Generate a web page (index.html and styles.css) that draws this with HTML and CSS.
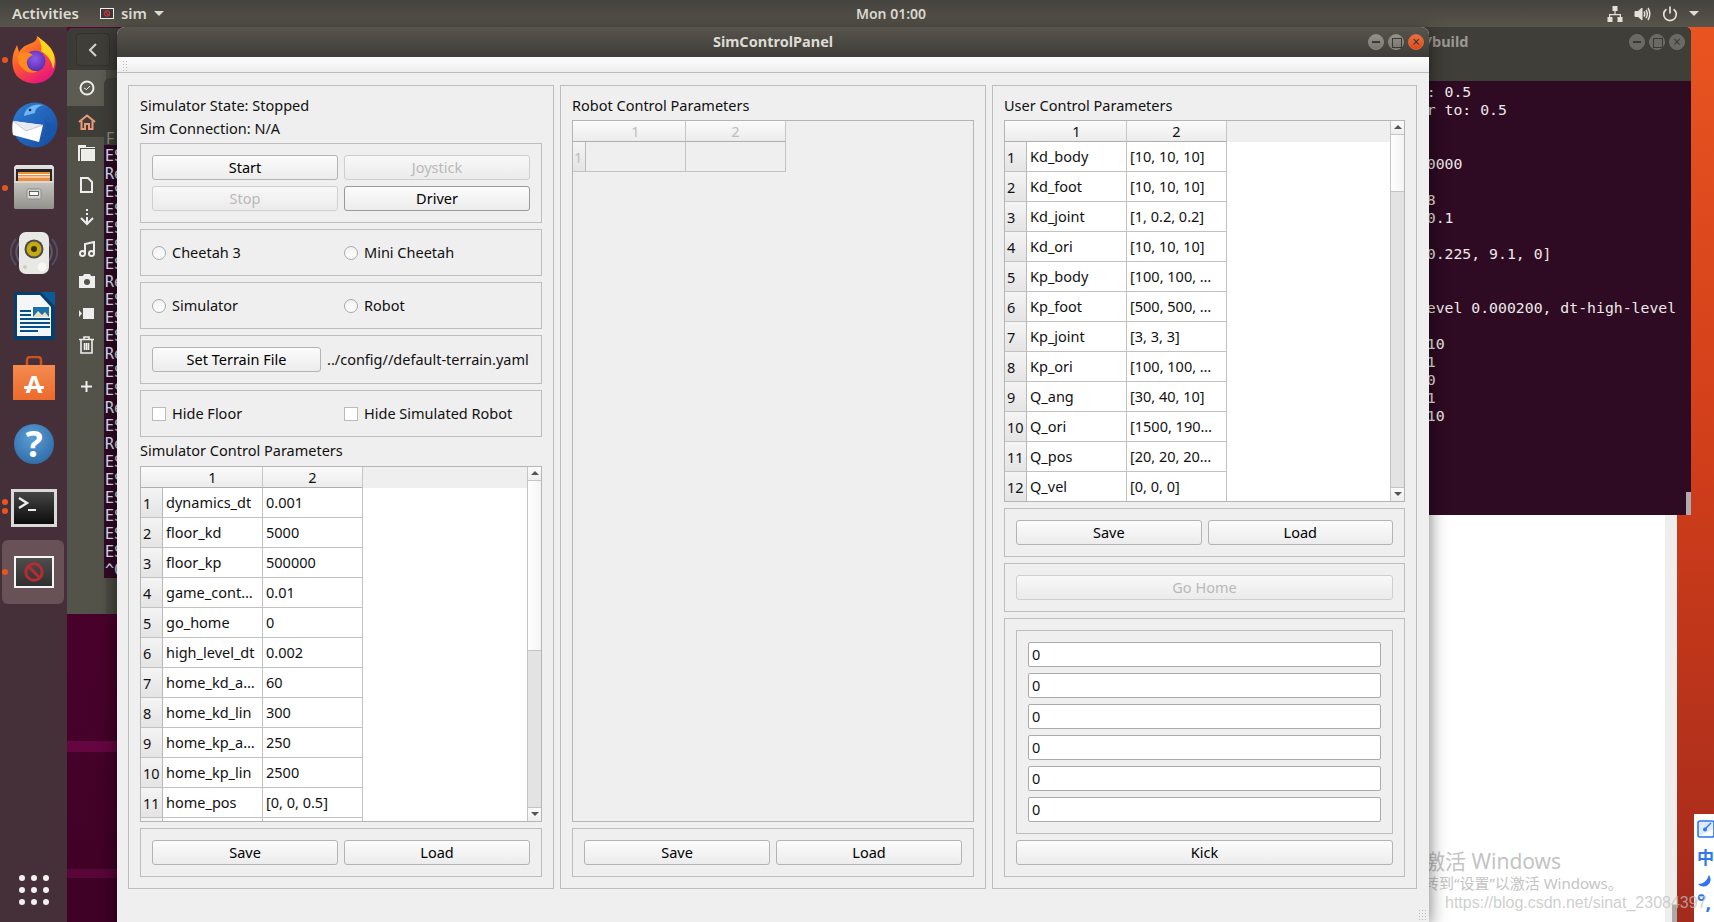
FILE: index.html
```html
<!DOCTYPE html>
<html lang="en">
<head>
<meta charset="utf-8">
<title>SimControlPanel</title>
<link rel="stylesheet" href="styles.css">
</head>
<body>
<header class="topbar">
  <div class="topbar-left">
    <span class="activities">Activities</span>
    <span class="app-menu">
      <svg class="app-menu-icon" viewBox="0 0 14 11"><rect x=".5" y=".5" width="13" height="10" fill="#3a3a3a" stroke="#eee"/><circle cx="7" cy="5.5" r="2.6" fill="none" stroke="#c8343a" stroke-width="1.2"/><path d="M5.2 3.7 8.8 7.3" stroke="#c8343a" stroke-width="1.1"/></svg>
      <span>sim</span>
      <i class="caret"></i>
    </span>
  </div>
  <span class="clock">Mon 01:00</span>
  <div class="tray">
    <svg width="16" height="16" viewBox="0 0 16 16" fill="#e4e1d9"><rect x="5.5" y="0" width="5" height="5"/><rect x="0.5" y="11" width="5" height="5"/><rect x="10.5" y="11" width="5" height="5"/><path d="M7.4 5h1.2v3h5.4v3h-1.2V9.2H3.2V11H2V8h5.4z"/></svg>
    <svg width="17" height="16" viewBox="0 0 17 16" fill="none" stroke="#e4e1d9"><path d="M1 5.5h3L8 2v12l-4-3.500H1z" fill="#e4e1d9"/><path d="M10 5.500q1.500 2.500 0 5M12 3.800q2.600 4.200 0 8.400M14 2q3.600 6 0 12" stroke-width="1.500"/></svg>
    <svg width="16" height="16" viewBox="0 0 16 16" fill="none" stroke="#e4e1d9" stroke-width="1.700"><path d="M4.400 3.200a6.300 6.300 0 1 0 7.200 0M8 .5v7"/></svg>
    <i class="caret"></i>
  </div>
</header>

<div class="desktop">
  <nav class="dock">
    <div class="dock-item"><i class="run-dot"></i>
      <svg class="dock-icon" viewBox="0 0 48 48"><defs><linearGradient id="fx" x1="0" y1="0" x2=".6" y2="1"><stop offset="0" stop-color="#ffb020"/><stop offset=".5" stop-color="#ff5a2c"/><stop offset="1" stop-color="#e9187a"/></linearGradient><radialGradient id="fy" cx=".5" cy=".4" r=".6"><stop offset="0" stop-color="#8f5ce8"/><stop offset="1" stop-color="#5a2ab0"/></radialGradient></defs>
      <path d="M27 0c3 5 13 9 17 18 4 10 1 20-6 25-8 6-21 6-29-1C2 36 1 25 4 16l3-7 2 7c2-3 5-6 8-7 5-2 10-3 10-9z" fill="url(#fx)"/><path d="M27 0c6 5 14 9 17 19 1 5 1 10-1 14-1-9-6-14-12-18 1-4 0-9-4-15z" fill="#ffd21e"/><circle cx="25" cy="25" r="10.500" fill="url(#fy)"/><path d="M8 19c4-3 9-4 15 0-3 1-7 4-6 9 1 5 6 8 11 7-5 3-12 2-16-3-4-4-5-9-4-13z" fill="#ff8a1f"/></svg></div>
    <div class="dock-item">
      <svg class="dock-icon" viewBox="0 0 48 48"><defs><linearGradient id="tb" x1="0" y1="0" x2="1" y2="1"><stop offset="0" stop-color="#2e7fd8"/><stop offset="1" stop-color="#154a9c"/></linearGradient></defs>
      <circle cx="25" cy="25" r="22.500" fill="url(#tb)"/><path d="M14 15c2-8 10-12 20-10-6 1-9 4-9 8l-11 3z" fill="#6fb6ee"/><circle cx="20" cy="10" r="1.300" fill="#0c2a55"/><path d="M3 21l30 4-4 17-26-7c-1-4-1-10 0-14z" fill="#fff"/><path d="M3 21l13 10 17-6" fill="#e8eaf0" stroke="#aab" stroke-width=".6"/><path d="M33 18c4 6 4 16-2 26 8-3 14-10 15-19-4 0-9-3-13-7z" fill="#1b56ad"/></svg></div>
    <div class="dock-item"><i class="run-dot"></i>
      <svg class="dock-icon" viewBox="0 0 48 48"><defs><linearGradient id="cb" x1="0" y1="0" x2="0" y2="1"><stop offset="0" stop-color="#e6e4e0"/><stop offset="1" stop-color="#93918c"/></linearGradient></defs>
      <path d="M4 3l2-2h36l2 2v41l-1 1H5l-1-1z" fill="url(#cb)"/><rect x="6" y="5" width="36" height="13" fill="#262626"/><rect x="8" y="8" width="32" height="9" fill="#ef8e3a"/><path d="M8 10.500h32M8 13h32" stroke="#fff" stroke-width="1"/><rect x="4" y="17" width="40" height="2" fill="#d8d6d2"/><rect x="17" y="25" width="14" height="10" rx="1.500" fill="#d5d3cf" stroke="#8d8b87"/><rect x="19.500" y="27.500" width="9" height="4" fill="#fff" stroke="#444" stroke-width=".8"/></svg></div>
    <div class="dock-item">
      <svg class="dock-icon" viewBox="0 0 48 48"><path d="M6 11C-1 19-1 29 6 37M42 11c7 8 7 18 0 26" fill="none" stroke="#5a5a78" stroke-width="2" opacity=".7"/><path d="M10 14C5 20 5 28 10 34M38 14c5 6 5 14 0 20" fill="none" stroke="#6a6a88" stroke-width="2" opacity=".7"/><rect x="9" y="4" width="30" height="42" rx="7" fill="#e8e8e4"/><circle cx="24" cy="21" r="9.500" fill="#4a4a48"/><circle cx="24" cy="21" r="7.500" fill="#c6a912"/><circle cx="24" cy="21" r="3" fill="#3a3208"/><circle cx="32" cy="39" r="4.500" fill="#f7f7f5"/><circle cx="15" cy="39" r="2" fill="#ccc"/></svg></div>
    <div class="dock-item">
      <svg class="dock-icon" viewBox="0 0 48 48"><path d="M4 0h27l14 14v34H4z" fill="#063f6f"/><path d="M31 0h14v14z" fill="#0a5c97"/><path d="M7 3h23l11 12v29H7z" fill="#f4f6f7"/><path d="M10 19h11M10 23h11M10 27h30M10 31h30M10 35h30M10 39h18" stroke="#045087" stroke-width="2"/><rect x="23" y="15" width="16" height="10" fill="#1d70a8"/><path d="M23 25l5-6 4 4 3-3 4 5z" fill="#e9e2c8"/></svg></div>
    <div class="dock-item">
      <svg class="dock-icon" viewBox="0 0 48 48"><defs><linearGradient id="bg" x1="0" y1="0" x2="0" y2="1"><stop offset="0" stop-color="#f58b4f"/><stop offset="1" stop-color="#ec6a2c"/></linearGradient></defs><path d="M17 10V4q0-3 3-3h8q3 0 3 3v6" fill="none" stroke="#c9531f" stroke-width="2.500"/><rect x="3" y="9" width="42" height="35" fill="url(#bg)"/><text x="24" y="37" class="bag-letter">A</text><rect x="14" y="30" width="20" height="3" fill="#fff"/></svg></div>
    <div class="dock-item">
      <svg class="dock-icon" viewBox="0 0 48 48"><defs><radialGradient id="hp" cx=".45" cy=".35" r=".7"><stop offset="0" stop-color="#5c9dd6"/><stop offset="1" stop-color="#2e6ba6"/></radialGradient></defs><circle cx="24" cy="24" r="20" fill="url(#hp)"/><text x="24" y="37" class="help-letter">?</text></svg></div>
    <div class="dock-item"><i class="run-dot run-dot-a"></i><i class="run-dot run-dot-b"></i>
      <svg class="dock-icon" viewBox="0 0 48 48"><rect x="1" y="5" width="46" height="38" fill="#d9d9d7"/><defs><linearGradient id="tm" x1="0" y1="0" x2="0" y2="1"><stop offset="0" stop-color="#454545"/><stop offset="1" stop-color="#0c0c0c"/></linearGradient></defs><rect x="4" y="8" width="40" height="32" fill="url(#tm)"/><path d="M9 14l8 5-8 5" fill="none" stroke="#eee" stroke-width="2.400"/><path d="M18 26h8" stroke="#eee" stroke-width="2"/></svg></div>
    <div class="dock-item dock-item-active"><i class="run-dot"></i>
      <svg class="dock-icon" viewBox="0 0 48 48"><defs><linearGradient id="sm" x1="0" y1="0" x2="0" y2="1"><stop offset="0" stop-color="#4f4f4f"/><stop offset="1" stop-color="#2e2e2e"/></linearGradient></defs><rect x="5" y="9" width="38" height="30" fill="url(#sm)" stroke="#f4f4f4" stroke-width="2"/><circle cx="24" cy="24" r="8.200" fill="none" stroke="#b92b32" stroke-width="3"/><path d="M18.500 18.500l11 11" stroke="#b92b32" stroke-width="3"/></svg></div>
    <div class="app-grid"><i></i><i></i><i></i><i></i><i></i><i></i><i></i><i></i><i></i></div>
  </nav>

  <main class="wallpaper">
    <section class="files-window">
      <div class="files-head"><span class="back-btn"><svg width="10" height="14" viewBox="0 0 10 14" fill="none" stroke="#d6d3cb" stroke-width="2"><path d="M8 1 2 7l6 6"/></svg></span></div>
      <ul class="files-side">
        <li class="side-recent"><svg width="18" height="18" viewBox="0 0 18 18" fill="none" stroke="#eee" stroke-width="2"><circle cx="9" cy="9" r="6.500"/><path d="M6 9l2.500 1.500L12 7" stroke-width="1"/></svg></li>
        <li class="side-home"><svg width="18" height="16" viewBox="0 0 18 16" fill="none" stroke="#f0997a" stroke-width="2"><path d="M1 8l8-6.500L17 8"/><path d="M3.500 6.500V15h3.500v-5h4v5h3.500V6.500"/></svg></li>
        <li><svg width="17" height="16" viewBox="0 0 17 16" fill="#eeeeea"><path d="M0 0h8v2h9v1H2v13H0z"/><rect x="3" y="4" width="14" height="12"/></svg></li>
        <li><svg width="13" height="16" viewBox="0 0 13 16" fill="none" stroke="#eee" stroke-width="2"><path d="M1 1h7l4 4v10H1z"/></svg></li>
        <li><svg width="14" height="17" viewBox="0 0 14 17" fill="none" stroke="#eee" stroke-width="2"><path d="M7 0v2M7 4v2M7 8v7M1 9l6 6 6-6"/></svg></li>
        <li><svg width="16" height="16" viewBox="0 0 16 16" fill="none" stroke="#eee" stroke-width="2"><circle cx="3.500" cy="12.500" r="2.500"/><circle cx="12.500" cy="12.500" r="2.500"/><path d="M6 12V3l9-2v11"/></svg></li>
        <li><svg width="16" height="14" viewBox="0 0 16 14" fill="#eee"><path d="M5 0h6l1 2h4v12H0V2h4z"/><circle cx="8" cy="8" r="3" fill="#53534a"/></svg></li>
        <li><svg width="15" height="11" viewBox="0 0 15 11" fill="#eee"><rect x="4" width="11" height="11"/><path d="M0 2l3 3.500L0 9z"/></svg></li>
        <li><svg width="15" height="18" viewBox="0 0 15 18" fill="none" stroke="#eee" stroke-width="1.600"><path d="M0 3.500h15M5 3V1h5v2M2 4v13h11V4M5.500 7v7M7.500 7v7M9.500 7v7"/></svg></li>
        <li class="side-add"><svg width="11" height="11" viewBox="0 0 11 11" stroke="#eee" stroke-width="2"><path d="M5.500 0v11M0 5.500h11"/></svg></li>
      </ul>
      <div class="log-tab">F</div>
      <pre class="log-term">ES
Re
ES
ES
ES
ES
ES
Re
ES
ES
ES
Re
ES
ES
Re
ES
Re
ES
ES
ES
ES
ES
ES
^C</pre>
    </section>

    <section class="terminal-window">
      <div class="terminal-head">
        <span class="terminal-title">/build</span>
        <span class="win-btns win-btns-dim"><i class="wb wb-min"></i><i class="wb wb-max"></i><i class="wb wb-close"></i></span>
      </div>
      <pre class="terminal-text">   : 0.5
   r to: 0.5


   0000

   8
   0.1

   0.225, 9.1, 0]


   evel 0.000200, dt-high-level

   10
   1
   0
   1
   10</pre>
      <i class="terminal-thumb"></i>
    </section>

    <section class="browser-window">
      <div class="activate">
        <div class="activate-big">激活 Windows</div>
        <div class="activate-small">转到“设置”以激活 Windows。</div>
      </div>
      <i class="browser-thumb"></i>
    </section>

    <section class="sim-window">
      <div class="sim-title">
        <span>SimControlPanel</span>
        <span class="win-btns"><i class="wb wb-min"></i><i class="wb wb-max"></i><i class="wb wb-close wb-close-on"></i></span>
      </div>
      <div class="sim-toolbar"><i class="grip"></i></div>
      <div class="sim-body">

        <div class="group">
          <div class="status">
            <div class="label">Simulator State: Stopped</div>
            <div class="label">Sim Connection: N/A</div>
          </div>
          <div class="frame frame-buttons">
            <button class="btn">Start</button>
            <button class="btn" disabled>Joystick</button>
            <button class="btn" disabled>Stop</button>
            <button class="btn btn-focus">Driver</button>
          </div>
          <div class="frame frame-opts">
            <label class="opt"><i class="radio"></i>Cheetah 3</label>
            <label class="opt"><i class="radio"></i>Mini Cheetah</label>
          </div>
          <div class="frame frame-opts">
            <label class="opt"><i class="radio"></i>Simulator</label>
            <label class="opt"><i class="radio"></i>Robot</label>
          </div>
          <div class="frame frame-file">
            <button class="btn btn-file">Set Terrain File</button>
            <span class="file-path">../config//default-terrain.yaml</span>
          </div>
          <div class="frame frame-opts">
            <label class="opt"><i class="check"></i>Hide Floor</label>
            <label class="opt"><i class="check"></i>Hide Simulated Robot</label>
          </div>
          <div class="param-block">
            <div class="label label-short">Simulator Control Parameters</div>
            <div class="table">
              <div class="table-view">
                <table>
                  <colgroup><col class="c-rh"><col class="c-data"><col class="c-data"><col></colgroup>
                  <thead><tr><th class="corner"></th><th>1</th><th>2</th><th class="filler"></th></tr></thead>
                  <tbody>
                    <tr><th>1</th><td>dynamics_dt</td><td>0.001</td></tr>
                    <tr><th>2</th><td>floor_kd</td><td>5000</td></tr>
                    <tr><th>3</th><td>floor_kp</td><td>500000</td></tr>
                    <tr><th>4</th><td>game_cont…</td><td>0.01</td></tr>
                    <tr><th>5</th><td>go_home</td><td>0</td></tr>
                    <tr><th>6</th><td>high_level_dt</td><td>0.002</td></tr>
                    <tr><th>7</th><td>home_kd_a…</td><td>60</td></tr>
                    <tr><th>8</th><td>home_kd_lin</td><td>300</td></tr>
                    <tr><th>9</th><td>home_kp_a…</td><td>250</td></tr>
                    <tr><th>10</th><td>home_kp_lin</td><td>2500</td></tr>
                    <tr><th>11</th><td>home_pos</td><td>[0, 0, 0.5]</td></tr>
                    <tr><th></th><td></td><td></td></tr>
                  </tbody>
                </table>
              </div>
              <div class="scrollbar"><span class="sb-btn sb-up"></span><span class="sb-thumb sb-thumb-sim"></span><span class="sb-trough"></span><span class="sb-btn sb-down"></span></div>
            </div>
          </div>
          <div class="frame frame-save">
            <button class="btn">Save</button>
            <button class="btn">Load</button>
          </div>
        </div>

        <div class="group">
          <div class="param-block">
            <div class="label">Robot Control Parameters</div>
            <div class="table table-off">
              <div class="table-view">
                <table>
                  <colgroup><col class="c-rh-sm"><col class="c-data"><col class="c-data"><col></colgroup>
                  <thead><tr><th class="corner"></th><th>1</th><th>2</th><th class="filler"></th></tr></thead>
                  <tbody><tr><th>1</th><td></td><td></td></tr></tbody>
                </table>
              </div>
            </div>
          </div>
          <div class="frame frame-save">
            <button class="btn">Save</button>
            <button class="btn">Load</button>
          </div>
        </div>

        <div class="group">
          <div class="param-block param-block-user">
            <div class="label">User Control Parameters</div>
            <div class="table">
              <div class="table-view">
                <table>
                  <colgroup><col class="c-rh"><col class="c-data"><col class="c-data"><col></colgroup>
                  <thead><tr><th class="corner"></th><th>1</th><th>2</th><th class="filler"></th></tr></thead>
                  <tbody>
                    <tr><th>1</th><td>Kd_body</td><td>[10, 10, 10]</td></tr>
                    <tr><th>2</th><td>Kd_foot</td><td>[10, 10, 10]</td></tr>
                    <tr><th>3</th><td>Kd_joint</td><td>[1, 0.2, 0.2]</td></tr>
                    <tr><th>4</th><td>Kd_ori</td><td>[10, 10, 10]</td></tr>
                    <tr><th>5</th><td>Kp_body</td><td>[100, 100, …</td></tr>
                    <tr><th>6</th><td>Kp_foot</td><td>[500, 500, …</td></tr>
                    <tr><th>7</th><td>Kp_joint</td><td>[3, 3, 3]</td></tr>
                    <tr><th>8</th><td>Kp_ori</td><td>[100, 100, …</td></tr>
                    <tr><th>9</th><td>Q_ang</td><td>[30, 40, 10]</td></tr>
                    <tr><th>10</th><td>Q_ori</td><td>[1500, 190…</td></tr>
                    <tr><th>11</th><td>Q_pos</td><td>[20, 20, 20…</td></tr>
                    <tr><th>12</th><td>Q_vel</td><td>[0, 0, 0]</td></tr>
                  </tbody>
                </table>
              </div>
              <div class="scrollbar"><span class="sb-btn sb-up"></span><span class="sb-thumb sb-thumb-user"></span><span class="sb-trough"></span><span class="sb-btn sb-down"></span></div>
            </div>
          </div>
          <div class="frame frame-save">
            <button class="btn">Save</button>
            <button class="btn">Load</button>
          </div>
          <div class="frame frame-home">
            <button class="btn" disabled>Go Home</button>
          </div>
          <div class="frame frame-kick">
            <div class="frame frame-inputs">
              <input class="field" value="0">
              <input class="field" value="0">
              <input class="field" value="0">
              <input class="field" value="0">
              <input class="field" value="0">
              <input class="field" value="0">
            </div>
            <button class="btn">Kick</button>
          </div>
        </div>

      </div>
      <i class="size-grip"></i>
    </section>

    <div class="ime">
      <svg class="ime-check" width="18" height="18" viewBox="0 0 18 18"><rect x="1" y="1" width="16" height="16" rx="2" fill="#dfeafe" stroke="#2e76f2" stroke-width="1.600"/><path d="M8 9l6-6" stroke="#2e76f2" stroke-width="1.400"/><circle cx="8" cy="9.500" r="2" fill="#2e76f2"/><path d="M2 16l14-7v7z" fill="#fff" opacity=".8"/></svg>
      <span class="ime-cn">中</span>
      <svg class="ime-moon" width="15" height="15" viewBox="0 0 15 15"><path d="M12 1A7 7 0 0 1 1 10Q9 10 12 1z" fill="#2e76f2"/></svg>
      <span class="ime-punct">°,</span>
    </div>
  </main>
</div>

<div class="watermark">https://blog.csdn.net/sinat_23084397</div>
</body>
</html>
```

FILE: styles.css
```css
* { box-sizing: border-box; }
html, body { margin: 0; height: 100%; }
body {
  width: 1714px;
  height: 922px;
  overflow: hidden;
  position: relative;
  display: flex;
  flex-direction: column;
  font: 14.5px/1 "Noto Sans", sans-serif;
  color: #111;
  background: #300a24;
}

/* ---------- GNOME top bar ---------- */
.topbar {
  height: 27px;
  flex: none;
  display: flex;
  align-items: center;
  justify-content: space-between;
  padding: 0 15px 0 12px;
  position: relative;
  background: linear-gradient(#45433e, #57544b);
  color: #dfdcd4;
}
.topbar-left { display: flex; align-items: center; gap: 21px; }
.activities { font-size: 15px; font-weight: 600; }
.app-menu { display: flex; align-items: center; gap: 7px; font-size: 15px; font-weight: 600; }
.app-menu-icon { width: 14px; height: 11px; }
.caret { width: 0; height: 0; border: 5px solid transparent; border-top: 5px solid #dfdcd4; border-bottom: 0; }
.clock { position: absolute; left: 855px; width: 72px; text-align: center; font-weight: 600; font-size: 14px; white-space: nowrap; }
.tray { display: flex; align-items: center; gap: 11px; }

/* ---------- Desktop ---------- */
.desktop { flex: 1; display: flex; min-height: 0; }
.dock {
  width: 67px;
  flex: none;
  display: flex;
  flex-direction: column;
  padding-top: 1px;
  background: #45303a;
  position: relative;
  z-index: 3;
}
.dock-item { height: 64px; flex: none; display: flex; align-items: center; justify-content: center; position: relative; }
.dock-item-active::before {
  content: "";
  position: absolute;
  left: 2px; right: 3px; top: 0; bottom: 0;
  border-radius: 6px;
  background: #695158;
}
.dock-icon { width: 48px; height: 48px; position: relative; }
.bag-letter { font: 700 24px "Noto Sans", sans-serif; fill: #fff; text-anchor: middle; }
.help-letter { font: 700 36px "Noto Sans", sans-serif; fill: #fff; text-anchor: middle; }
.run-dot { position: absolute; left: 2px; top: 29px; width: 6px; height: 6px; border-radius: 50%; background: #e9541f; z-index: 1; }
.run-dot-a { top: 23px; }
.run-dot-b { top: 32px; }
.app-grid {
  margin-top: auto;
  margin-bottom: 17px;
  align-self: center;
  display: grid;
  grid-template-columns: repeat(3, 6px);
  gap: 6px;
}
.app-grid i { width: 6px; height: 6px; border-radius: 50%; background: #f2f0ee; }

.wallpaper {
  flex: 1;
  position: relative;
  background:
    linear-gradient(180deg, transparent 0 714px, #650640 714px 725px, transparent 725px 842px, #5a0538 842px 851px, transparent 851px),
    linear-gradient(180deg, #5c0336, #3f0126);
}
.wallpaper::after {
  content: "";
  position: absolute;
  left: 50%; right: 0; top: 0; bottom: 0;
  background: linear-gradient(180deg, #e95420 0%, #cf3d1a 50%, #a42a1c 100%);
}

/* File manager + log behind */
.files-window {
  position: absolute;
  left: 0; top: 1px;
  width: 60px;
  height: 586px;
  background: #4b4b43;
  z-index: 1;
  overflow: hidden;
  border-top-left-radius: 6px;
}
.files-head { height: 42px; background: #3c3b37; padding: 5px 0 0 9px; }
.back-btn {
  width: 34px; height: 33px;
  display: flex; align-items: center; justify-content: center;
  border: 1px solid #33322e; border-radius: 4px;
  background: #3f3e39;
}
.files-side { list-style: none; margin: 0; padding: 0; width: 39px; background: #53534a; height: 100%; }
.files-side li { height: 32px; display: flex; align-items: center; justify-content: center; }
.files-side .side-recent { height: 36px; background: #5c5c52; }
.files-side .side-home { height: 31px; background: #3e3e38; }
.files-side .side-add { margin-top: 9px; }
.log-tab {
  position: absolute;
  left: 37px; top: 50px;
  width: 30px; height: 67px;
  padding: 52px 0 0 2px;
  background: #3f3e39;
  color: #8d8c86;
  font-size: 16px;
  border-top-left-radius: 6px;
}
.log-term {
  position: absolute;
  left: 37px; top: 117px;
  width: 30px; height: 433px;
  margin: 0;
  padding: 2px 0 0 1px;
  background: #300a24;
  color: #dfe3f5;
  font: 15px/18px "DejaVu Sans Mono", monospace;
  overflow: hidden;
}

/* Terminal behind on the right */
.terminal-window {
  position: absolute;
  left: 1333px; top: 0;
  width: 291px;
  height: 488px;
  background: #2e0a23;
  z-index: 1;
  border-top-right-radius: 6px;
  overflow: hidden;
}
.terminal-head {
  height: 54px;
  background: #3f3e39;
  color: #9b9a92;
  position: relative;
  font-weight: 700;
  font-size: 14.5px;
}
.terminal-title { position: absolute; left: 26px; top: 7px; }
.terminal-head .win-btns { position: absolute; right: 6px; top: 7px; }
.terminal-text {
  position: absolute;
  left: 0; top: 56px;
  margin: 0;
  color: #ece9e6;
  font: 14.800px/18px "DejaVu Sans Mono", monospace;
}
.terminal-thumb { position: absolute; right: 0; bottom: 0; width: 5px; height: 23px; background: #b0abb0; }

.browser-window {
  position: absolute;
  left: 1320px; top: 488px;
  width: 290px;
  height: 407px;
  background: linear-gradient(90deg, #fff 0 278px, #efeeec 278px);
  z-index: 1;
  overflow: hidden;
}
.activate { position: absolute; left: 37px; top: 334px; color: #c4c4c4; white-space: nowrap; }
.activate-big { font: 21px/24px "Noto Sans", "Noto Sans CJK SC", sans-serif; }
.activate-small { font: 15px/20px "Noto Sans", "Noto Sans CJK SC", sans-serif; }
.browser-thumb { position: absolute; right: 0; bottom: 0; width: 5px; height: 17px; background: #aaa; }

.ime {
  position: absolute;
  right: 0; bottom: 0;
  width: 20px; height: 108px;
  z-index: 1;
  background: #fff;
  overflow: hidden;
  color: #2e76f2;
  padding: 6px 0 0 3px;
  display: flex;
  flex-direction: column;
  align-items: flex-start;
}
.ime-check { flex: none; }
.ime-cn { font: 700 17px/20px "Noto Sans CJK SC", sans-serif; margin-top: 9px; }
.ime-moon { flex: none; margin-top: 7px; }
.ime-punct { font: 700 20px/14px "Noto Sans", sans-serif; margin-top: 6px; }

/* ---------- Sim window ---------- */
.sim-window {
  position: absolute;
  left: 50px; top: 0;
  width: 1312px;
  height: 895px;
  z-index: 2;
  display: flex;
  flex-direction: column;
  border-radius: 8px 8px 0 0;
  overflow: hidden;
  background: #efefef;
  box-shadow: 0 4px 18px rgba(0, 0, 0, .55);
}
.sim-title {
  height: 30px;
  flex: none;
  display: flex;
  align-items: center;
  justify-content: center;
  position: relative;
  padding-bottom: 2px;
  background: linear-gradient(#57544c, #3e3d39);
  color: #dfdbd2;
  font-weight: 700;
  font-size: 14.5px;
}
.sim-title .win-btns { position: absolute; right: 5px; top: 7px; }
.win-btns { display: flex; gap: 4px; }
.wb {
  width: 16px; height: 16px;
  border-radius: 50%;
  background: linear-gradient(#92918a, #75746e);
  border: 1px solid #8d8c85;
  position: relative;
}
.wb::after { content: ""; position: absolute; }
.wb-min::after { left: 3px; right: 3px; top: 6px; height: 2px; background: #3a3935; }
.wb-max::after { left: 3px; top: 3px; width: 8px; height: 8px; border: 1px solid #3a3935; }
.wb-close::after { content: "×"; left: 0; right: 0; top: 0; text-align: center; font: 14px/13px "Noto Sans", sans-serif; color: #3a3935; }
.wb-close-on { background: linear-gradient(#f0703f, #dc4a1a); border-color: #d9693f; }
.win-btns-dim .wb { background: #6a6963; border-color: #6f6e68; }
.sim-toolbar {
  height: 16px;
  flex: none;
  background: linear-gradient(#fdfdfd, #eeeeee);
  border-bottom: 1px solid #bcbcbc;
  padding: 3px 0 0 5px;
}
.grip {
  display: block; width: 5px; height: 12px;
  background-image: radial-gradient(#bbb 0.8px, transparent 1px);
  background-size: 3px 3px;
}
.sim-body {
  flex: 1;
  display: grid;
  grid-template-columns: 426px 426px 425px;
  grid-template-rows: minmax(0, 1fr);
  column-gap: 6px;
  padding: 12px 12px 33px 11px;
  min-height: 0;
}
.group {
  border: 1px solid #bdbdbd;
  padding: 10px 11px 11px;
  display: flex;
  flex-direction: column;
  gap: 6px;
  min-width: 0;
  min-height: 0;
}
.status { height: 41px; display: flex; flex-direction: column; gap: 3px; }
.label { height: 20px; flex: none; display: flex; align-items: center; padding-bottom: 2px; white-space: nowrap; }
.label-short { height: 19px; padding-bottom: 4px; }
.frame { border: 1px solid #bdbdbd; flex: none; }
.frame-buttons, .frame-save {
  display: grid;
  grid-template-columns: 1fr 1fr;
  gap: 6px;
  padding: 11px;
}
.frame-buttons { height: 80px; grid-template-rows: 25px 25px; }
.frame-save { height: 49px; grid-template-rows: 25px; }
.frame-opts { height: 47px; display: grid; grid-template-columns: 1fr 1fr; column-gap: 6px; padding: 0 11px; align-items: center; }
.frame-file { height: 49px; display: flex; align-items: center; gap: 6px; padding: 0 11px; }
.frame-home { height: 49px; padding: 11px; display: flex; }
.frame-kick { height: 259px; padding: 11px; display: flex; flex-direction: column; gap: 6px; }
.frame-inputs { height: 204px; padding: 11px; display: flex; flex-direction: column; gap: 6px; }

.btn {
  font: inherit;
  color: #000;
  height: 25px;
  padding: 0 0 1px;
  flex: 1;
  border: 1px solid #b4b4b4;
  border-radius: 3px;
  background: linear-gradient(#fcfcfc, #ececec);
}
.frame-kick .btn { flex: none; }
.btn:disabled { color: #b9b9b9; border-color: #cfcfcf; background: linear-gradient(#f8f8f8, #ebebeb); }
.btn-focus { border-color: #9a9a9a; }
.btn-file { flex: none; width: 169px; }
.file-path { white-space: nowrap; }
.opt { display: flex; align-items: center; gap: 6px; white-space: nowrap; }
.radio { width: 14px; height: 14px; flex: none; border-radius: 50%; border: 1px solid #a8a8a8; background: linear-gradient(#f2f2f2, #fff); }
.check { width: 14px; height: 14px; flex: none; border: 1px solid #bbb; background: #fff; }
.field {
  height: 25px;
  flex: none;
  width: 100%;
  padding: 0 3px 2px;
  font: inherit;
  color: #111;
  border: 1px solid #ababab;
  border-radius: 2px;
  background: #fff;
  outline: none;
}

/* ---------- Tables ---------- */
.param-block { flex: 1; min-height: 0; display: flex; flex-direction: column; gap: 4px; }
.param-block-user { flex: none; height: 406px; }
.table { flex: 1; min-height: 0; display: flex; border: 1px solid #b5b5b5; background: #fff; }
.table-view { flex: 1; min-width: 0; overflow: hidden; }
table { width: 100%; table-layout: fixed; border-collapse: separate; border-spacing: 0; }
.c-rh { width: 22px; }
.c-rh-sm { width: 13px; }
.c-data { width: 100px; }
thead th {
  height: 21px;
  padding: 1px 0 0;
  font-weight: 400;
  text-align: center;
  background: linear-gradient(#fbfbfb, #ececec);
  border-right: 1px solid #c6c6c6;
  border-bottom: 1px solid #aeaeae;
}
thead th.corner { border-right: 0; }
thead th.filler { background: #efefef; border: 0; }
tbody th {
  height: 30px;
  padding: 1px 0 0 2px;
  font-weight: 400;
  text-align: left;
  background: linear-gradient(#f4f4f4, #e4e4e4);
  border-right: 1px solid #b9b9b9;
  border-bottom: 1px solid #c2c2c2;
}
tbody td {
  height: 30px;
  padding: 0 0 1px 3px;
  white-space: nowrap;
  overflow: hidden;
  border-right: 1px solid #c2c2c2;
  border-bottom: 1px solid #c2c2c2;
}
.table-off { background: #efefef; }
.table-off th, .table-off td { color: #bdbdbd; }
.table-off tbody th { padding-left: 1px; }

.scrollbar { width: 14px; flex: none; display: flex; flex-direction: column; border-left: 1px solid #c4c4c4; background: #e3e3e3; }
.sb-btn { height: 14px; flex: none; background: linear-gradient(#fbfbfb, #eee); position: relative; }
.sb-btn::after { content: ""; position: absolute; left: 3px; border: 4px solid transparent; }
.sb-up { border-bottom: 1px solid #c4c4c4; }
.sb-up::after { top: 4px; border-bottom: 4px solid #555; border-top: 0; }
.sb-down { border-top: 1px solid #c4c4c4; }
.sb-down::after { top: 4px; border-top: 4px solid #555; border-bottom: 0; }
.sb-thumb { flex: none; background: linear-gradient(90deg, #fefefe, #f4f4f4); border-bottom: 1px solid #c4c4c4; }
.sb-thumb-sim { height: 170px; }
.sb-thumb-user { height: 57px; }
.sb-trough { flex: 1; }

.size-grip {
  position: absolute;
  right: 1px; bottom: 1px;
  width: 10px; height: 12px;
  background-image: radial-gradient(#bbb 0.8px, transparent 1px);
  background-size: 3px 3px;
}

.watermark {
  position: absolute;
  left: 1445px; top: 893px;
  z-index: 5;
  font: 16px/20px "Liberation Sans", sans-serif;
  color: rgba(190, 190, 190, .75);
  white-space: nowrap;
}
```
